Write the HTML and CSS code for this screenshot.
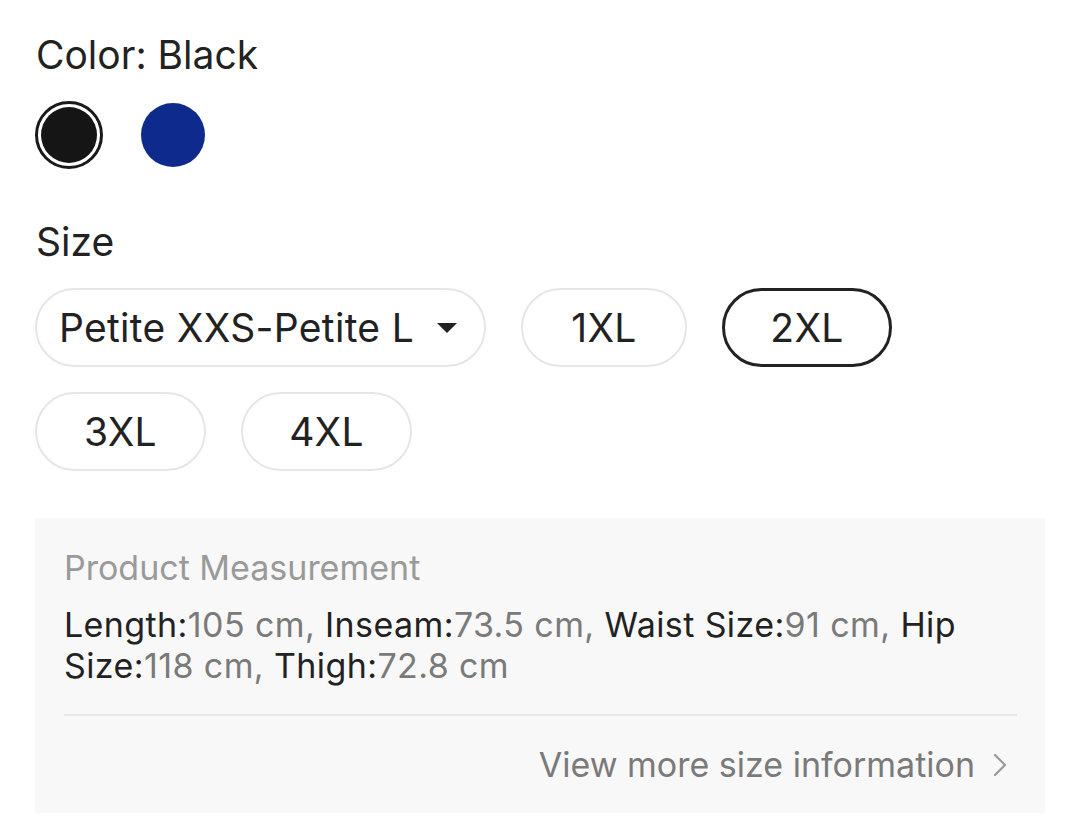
FILE: index.html
```html
<!DOCTYPE html>
<html>
<head>
<meta charset="utf-8">
<link rel="stylesheet" href="styles.css">
</head>
<body>
<div class="page">
  <div class="label color-label">Color: Black</div>
  <div class="swatches">
    <div class="swatch swatch-black selected"><span class="dot black"></span></div>
    <div class="swatch"><span class="dot blue"></span></div>
  </div>
  <div class="label size-label">Size</div>
  <div class="sizes">
    <div class="pill pill-wide">Petite XXS-Petite L
      <svg class="caret" width="22" height="12" viewBox="0 0 22 12"><path d="M1 1 L21 1 L11 11 Z" fill="#222"/></svg>
    </div>
    <div class="pill pill-1">1XL</div>
    <div class="pill active">2XL</div>
    <div class="pill">3XL</div>
    <div class="pill">4XL</div>
  </div>
  <div class="measure">
    <div class="measure-title">Product Measurement</div>
    <p class="measure-text"><b class="k">Length:</b>105 cm, <b class="k">Inseam:</b>73.5 cm, <b class="k">Waist Size:</b>91 cm, <b class="k">Hip Size:</b>118 cm, <b class="k">Thigh:</b>72.8 cm</p>
    <div class="divider"></div>
    <div class="more">View more size information
      <svg class="chev" width="14" height="24" viewBox="0 0 14 24"><path d="M2 2 L12 12 L2 22" fill="none" stroke="#999" stroke-width="2.2" stroke-linecap="round" stroke-linejoin="round"/></svg>
    </div>
  </div>
</div>
</body>
</html>
```

FILE: styles.css
```css
* { box-sizing: border-box; }
html, body { margin: 0; padding: 0; background: #fff; }
body { font-family: Inter, "Noto Sans", sans-serif; color: #222; }
.page { padding: 31px 35px 0 35px; width: 1080px; }
.label { font-size: 39px; line-height: 48px; color: #222; padding-left: 1px; }
.swatches { display: flex; gap: 36px; margin-top: 22px; align-items: center; }
.swatch { width: 68px; height: 68px; border-radius: 50%; display: flex; align-items: center; justify-content: center; }
.swatch.selected { border: 3px solid #1a1a1a; }
.dot { display: block; border-radius: 50%; }
.dot.black { width: 56px; height: 56px; background: #151515; }
.dot.blue { width: 64px; height: 64px; background: #0e2a8c; }
.size-label { margin-top: 49px; }
.sizes { display: flex; flex-wrap: wrap; gap: 25px 35px; margin-top: 22px; width: 880px; }
.pill { height: 79px; border: 2px solid #e6e6e6; border-radius: 40px; display: flex; align-items: center; justify-content: center; font-size: 39px; letter-spacing: 0.3px; color: #222; width: 171px; }
.pill-wide { width: 451px; justify-content: flex-start; padding-left: 22px; gap: 22px; }
.pill-1 { width: 166px; }
.pill.active { border: 3px solid #222; width: 170px; }
.caret { display: block; }
.measure { margin-top: 47px; width: 1010px; background: #f8f8f8; padding: 30px 28px 28px 29px; }
.measure-title { font-size: 34px; line-height: 40px; color: #9a9a9a; }
.measure-text { margin: 16px 0 0 0; font-size: 34px; line-height: 41px; letter-spacing: 0.4px; color: #7a7a7a; }
.k { color: #222; font-weight: 400; }
.divider { height: 2px; background: #e8e8e8; margin-top: 28px; }
.more { margin-top: 29px; display: flex; justify-content: flex-end; align-items: center; gap: 18px; font-size: 34px; line-height: 40px; color: #7a7a7a; padding-right: 10px; }
.chev { display: block; }
```
